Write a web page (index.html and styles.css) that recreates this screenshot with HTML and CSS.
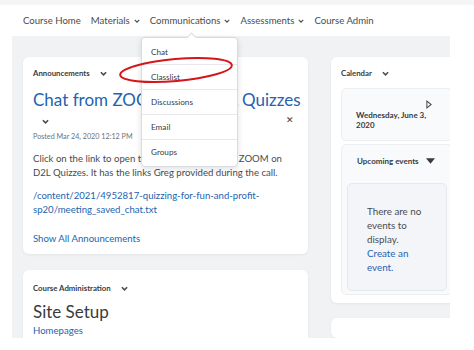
FILE: index.html
```html
<!DOCTYPE html>
<html lang="en">
<head>
  <meta charset="UTF-8" />
  <title>Course Home</title>
  <link rel="stylesheet" href="styles.css">
</head>
<body>
  <div class="topline"></div>
  <nav class="nav">
    <span class="nav-item">Course Home</span>
    <span class="nav-item">Materials <svg class="chev" viewBox="0 0 8 5"><path d="M1 1l3 3 3-3"/></svg></span>
    <span class="nav-item">Communications <svg class="chev" viewBox="0 0 8 5"><path d="M1 1l3 3 3-3"/></svg></span>
    <span class="nav-item">Assessments <svg class="chev" viewBox="0 0 8 5"><path d="M1 1l3 3 3-3"/></svg></span>
    <span class="nav-item">Course Admin</span>
  </nav>

  <main class="main">
    <div class="col-left">
      <section class="card ann">
        <div class="card-head">Announcements <svg class="chev big" viewBox="0 0 8 5"><path d="M1 1l3 3 3-3"/></svg></div>
        <h2 class="ann-title">Chat from ZOOM with D2L Quizzes</h2>
        <div class="title-tools">
          <svg class="chev title-chev" viewBox="0 0 8 5"><path d="M1 1l3 3 3-3"/></svg>
          <span class="close">✕</span>
        </div>
        <div class="posted">Posted Mar 24, 2020 12:12 PM</div>
        <p class="body-text">Click on the link to open the saved chat file from ZOOM on D2L Quizzes. It has the links Greg provided during the call.</p>
        <a class="link file-link">/content/2021/4952817-quizzing-for-fun-and-profit-sp20/meeting_saved_chat.txt</a>
        <a class="link show-all">Show All Announcements</a>
      </section>

      <section class="card admin">
        <div class="card-head">Course Administration <svg class="chev big" viewBox="0 0 8 5"><path d="M1 1l3 3 3-3"/></svg></div>
        <h2 class="site-title">Site Setup</h2>
        <a class="link">Homepages</a>
      </section>
    </div>

    <div class="col-right">
      <section class="card cal">
        <div class="card-head">Calendar <svg class="chev big" viewBox="0 0 8 5"><path d="M1 1l3 3 3-3"/></svg></div>
        <div class="cal-box">
          <div class="cal-arrow"><svg viewBox="0 0 7 10"><path d="M1 1v8l5-4z"/></svg></div>
          <div class="cal-date">Wednesday, June 3, 2020</div>
        </div>
        <div class="cal-box upcoming">
          <div class="up-head">Upcoming events <svg class="tri" viewBox="0 0 10 6"><path d="M0 0h10L5 6z"/></svg></div>
          <div class="empty">
            There are no events to display.
            <a class="link">Create an event.</a>
          </div>
        </div>
      </section>
      <section class="card help"></section>
    </div>
  </main>

  <div class="dropdown">
    <div class="dd-item">Chat</div>
    <div class="dd-item">Classlist</div>
    <div class="dd-item">Discussions</div>
    <div class="dd-item">Email</div>
    <div class="dd-item">Groups</div>
  </div>

  <svg class="mark" width="474" height="350" viewBox="0 0 474 350">
    <ellipse cx="176" cy="70" rx="56" ry="11" transform="rotate(-5 176 70)" />
  </svg>
</body>
</html>
```

FILE: styles.css
```css
body {
  margin: 0;
  background: #fff;
  color: #494c4e;
  font-family: Lato, 'Open Sans', sans-serif;
  width: 474px;
  height: 350px;
  overflow: hidden;
  position: relative;
}

.topline {
  height: 5px;
  background: #f4f5f6;
}

.nav {
  height: 31px;
  display: flex;
  align-items: center;
  gap: 10px;
  padding-left: 23px;
  font-size: 9.6px;
  box-sizing: border-box;
}

.nav-item {
  display: flex;
  align-items: center;
  gap: 4px;
  white-space: nowrap;
}

.chev {
  width: 6px;
  height: 4px;
  fill: none;
  stroke: #494c4e;
  stroke-width: 1.5;
}

.chev.big {
  width: 7px;
  height: 5px;
  stroke-width: 1.8;
  margin-left: 10px;
}

.main {
  margin-left: 12px;
  width: 438px;
  height: 302px;
  background: #f1f2f4;
  overflow: hidden;
  display: flex;
  gap: 23px;
  padding: 21px 0 0 11px;
  box-sizing: border-box;
}

.col-left {
  width: 285px;
  flex-shrink: 0;
  display: flex;
  flex-direction: column;
  gap: 16px;
}

.col-right {
  width: 132px;
  flex-shrink: 0;
  display: flex;
  flex-direction: column;
  gap: 15px;
}

.card {
  background: #fff;
  border-radius: 6px;
  box-shadow: 0 1px 3px rgba(0, 0, 0, 0.06);
  padding: 8px 10px;
  box-sizing: border-box;
}

.card-head {
  font-size: 7.8px;
  font-weight: bold;
  line-height: 16px;
  display: flex;
  align-items: center;
  color: #393b3d;
}

.link {
  display: block;
  color: #2463b0;
  font-size: 9.6px;
  line-height: 14px;
}

.ann {
  height: 197px;
}

.ann-title {
  margin: 8px 0 0;
  font-size: 17px;
  font-weight: normal;
  line-height: 21px;
  color: #2463b0;
  white-space: nowrap;
}

.title-tools {
  height: 21px;
  display: flex;
  justify-content: space-between;
  align-items: center;
}

.title-chev {
  margin: 2px 0 0 9px;
  width: 7px;
  height: 5px;
  stroke-width: 1.8;
}

.close {
  font-size: 9px;
  padding-right: 4px;
  margin-top: -3px;
  color: #393b3d;
}

.posted {
  font-size: 7.2px;
  line-height: 10px;
  margin-top: 1px;
  color: #6e7376;
}

.body-text {
  margin: 10px 0 0;
  padding-right: 15px;
  font-size: 9.6px;
  line-height: 14px;
}

.file-link {
  margin-top: 9px;
  padding-right: 30px;
}

.show-all {
  margin-top: 15px;
}

.admin {
  flex: 1;
  padding-top: 10px;
}

.site-title {
  margin: 5px 0 0;
  font-size: 17px;
  font-weight: normal;
  line-height: 22px;
  color: #393b3d;
}

.admin .link {
  margin-top: 1px;
}

.cal {
  height: 251px;
}

.cal-box {
  margin-top: 7px;
  background: #f9fafb;
  border: 1px solid #eceef0;
  border-radius: 5px;
  padding: 9px 14px 10px;
  box-sizing: border-box;
}

.cal-arrow {
  height: 12px;
  display: flex;
  justify-content: flex-end;
  align-items: center;
  padding-right: 6px;
}

.cal-arrow svg {
  width: 6px;
  height: 9px;
  fill: none;
  stroke: #494c4e;
  stroke-width: 1.2;
}

.cal-date {
  font-size: 8px;
  font-weight: bold;
  line-height: 10px;
  color: #393b3d;
  padding-right: 6px;
}

.upcoming {
  margin-top: 3px;
  padding: 10px 5px 4px;
  height: 151px;
}

.up-head {
  font-size: 8px;
  font-weight: bold;
  line-height: 12px;
  padding-left: 10px;
  display: flex;
  align-items: center;
  color: #393b3d;
}

.tri {
  width: 9px;
  height: 6px;
  margin-left: 7px;
  fill: #393b3d;
}

.empty {
  margin-top: 16px;
  background: #f4f5f9;
  border: 1px solid #e6e8ee;
  border-radius: 5px;
  padding: 20px 20px 16px 19px;
  font-size: 9.8px;
  line-height: 14px;
  height: 108px;
  box-sizing: border-box;
}

.empty .link {
  font-size: 9.8px;
}

.help {
  height: 40px;
}

.dropdown {
  position: absolute;
  left: 141px;
  top: 37px;
  width: 97px;
  background: #fff;
  border: 1px solid #d8dce2;
  border-radius: 4px;
  box-shadow: 0 2px 6px rgba(0, 0, 0, 0.12);
  padding: 2px 0 1px;
  box-sizing: border-box;
}

.dropdown::before {
  content: "";
  position: absolute;
  left: 46px;
  top: -4px;
  width: 6px;
  height: 6px;
  background: #fff;
  border-left: 1px solid #d8dce2;
  border-top: 1px solid #d8dce2;
  transform: rotate(45deg);
}

.dd-item {
  height: 25px;
  line-height: 25px;
  padding-left: 9px;
  font-size: 8.2px;
  color: #393b3d;
  border-bottom: 1px solid #e6e8eb;
  box-sizing: border-box;
}

.dd-item:last-child {
  border-bottom: none;
}

.mark {
  position: absolute;
  left: 0;
  top: 0;
  pointer-events: none;
}

.mark ellipse {
  fill: none;
  stroke: #d3161c;
  stroke-width: 2;
}
```
